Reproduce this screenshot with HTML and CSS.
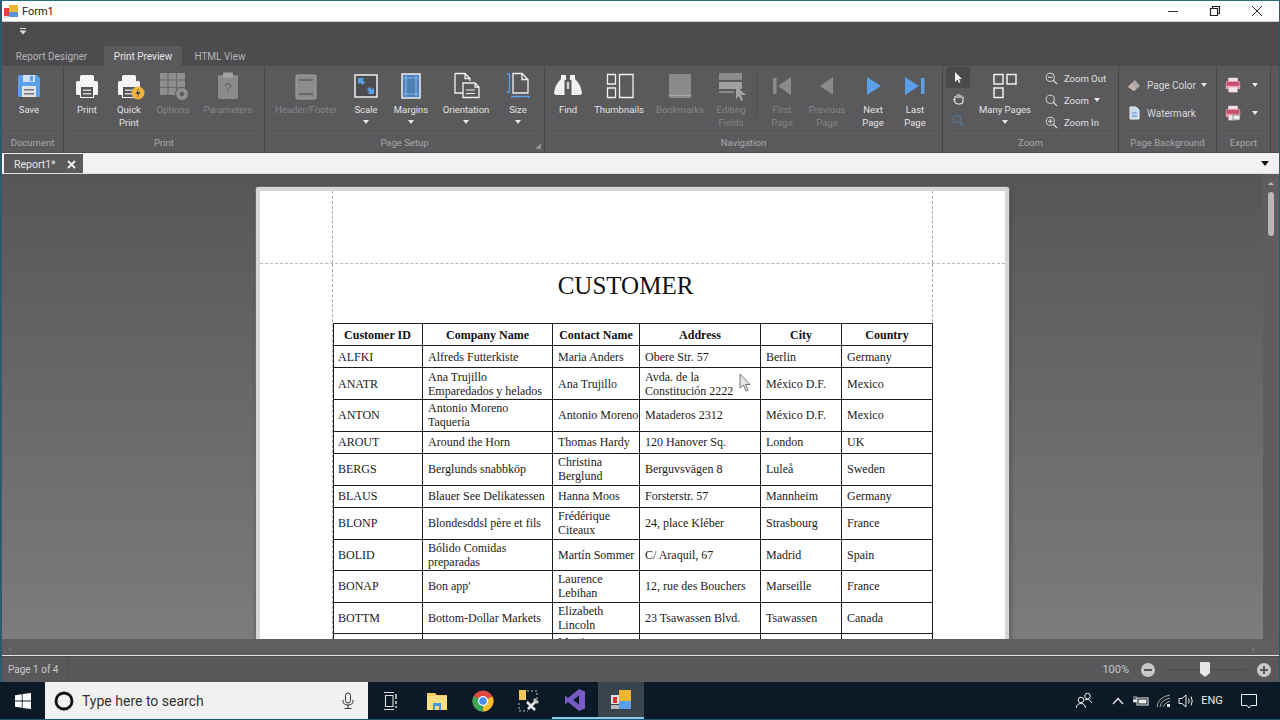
FILE: index.html
```html
<!DOCTYPE html>
<html lang="en">
<head>
<meta charset="utf-8">
<title>Form1</title>
<link rel="stylesheet" href="styles.css">
</head>
<body>
<svg class="sprites" width="0" height="0" aria-hidden="true">
  <symbol id="printer" viewBox="0 0 32 32">
    <path d="M9 11V6.500Q9 5 10.500 5H21.500Q23 5 23 6.500V11Z" fill="#f4f4f4"/>
    <path d="M5 12.500Q5 11 6.500 11H25.500Q27 11 27 12.500V23.500Q27 25 25.500 25H23V28H9V25H6.500Q5 25 5 23.500Z" fill="#f4f4f4"/>
    <rect x="10" y="17" width="12" height="10" fill="#565658"/>
    <rect x="12" y="19.500" width="8" height="1.500" fill="#cfcfcf"/>
    <rect x="12" y="23" width="8" height="1.500" fill="#cfcfcf"/>
  </symbol>
  <symbol id="pdf" viewBox="0 0 20 20">
    <path d="M4 1H16V6H4Z" fill="#f2dfe4"/>
    <path d="M1 7Q1 5 3 5H17Q19 5 19 7V15H16V19H4V15H1Z" fill="#e9a4b4"/>
    <rect x="2" y="6" width="16" height="5" fill="#c8506e"/>
    <rect x="5" y="13" width="10" height="6" fill="#f2e6ea"/>
  </symbol>
  <symbol id="mag" viewBox="0 0 16 16">
    <circle cx="6.500" cy="6.500" r="5" fill="none" stroke="currentColor" stroke-width="1.200"/>
    <path d="M10.200 10.200L15 15" stroke="currentColor" stroke-width="1.500"/>
  </symbol>
</svg>

<div class="window">
  <header class="titlebar">
    <svg class="app-icon" width="15" height="15" viewBox="0 0 15 15"><rect x="0" y="4" width="5" height="8" fill="#d9483b"/><rect x="5" y="1" width="9" height="7" fill="#f2b632"/><rect x="5" y="8" width="9" height="5" fill="#5b8fd9"/><rect x="0" y="12" width="5" height="2" fill="#ddd"/></svg>
    <span class="title-text">Form1</span>
    <div class="win-controls">
      <svg class="win-btn" width="14" height="14" viewBox="0 0 14 14"><path d="M2 7.500H12" stroke="#333" stroke-width="1"/></svg>
      <svg class="win-btn" width="14" height="14" viewBox="0 0 14 14"><path d="M2.500 4.500H9.500V11.500H2.500ZM4.500 4.500V2.500H11.500V9.500H9.500" fill="none" stroke="#222" stroke-width="1.200"/></svg>
      <svg class="win-btn" width="14" height="14" viewBox="0 0 14 14"><path d="M2 2L12 12M12 2L2 12" stroke="#222" stroke-width="1"/></svg>
    </div>
  </header>

  <div class="ribbon-head">
    <div class="qat"><svg width="8" height="7" viewBox="0 0 8 7"><path d="M1 .500H7" stroke="#ddd"/><path d="M.500 2.500H7.500L4 6.500Z" fill="#ddd"/></svg></div>
    <nav class="tabs">
      <span class="tab t1">Report Designer</span>
      <span class="tab t2 active">Print Preview</span>
      <span class="tab t3">HTML View</span>
    </nav>
  </div>

  <section class="ribbon">
    <div class="group g-doc">
      <div class="items">
        <div class="btn w54"><svg class="ico" viewBox="0 0 32 32"><path d="M5 6.500Q5 5 6.500 5H24L27 8V25.500Q27 27 25.500 27H6.500Q5 27 5 25.500Z" fill="#5b9fe8"/><rect x="10" y="5" width="12" height="7" fill="#cfe0f4"/><rect x="17" y="6" width="3" height="5" fill="#5b9fe8"/><rect x="9" y="16" width="14" height="11" fill="#dfe2e6"/><rect x="11" y="19" width="10" height="1.500" fill="#777"/><rect x="11" y="23" width="10" height="1.500" fill="#777"/></svg><span class="lbl">Save</span></div>
      </div>
      <div class="glabel">Document</div>
    </div>

    <div class="group g-print">
      <div class="items">
        <div class="btn w46"><svg class="ico"><use href="#printer"/></svg><span class="lbl">Print</span></div>
        <div class="btn w38"><svg class="ico" viewBox="0 0 32 32"><use href="#printer" width="32" height="32"/><circle cx="25" cy="23" r="6.500" fill="#f0b43c"/><path d="M26 18L22.500 24H25L24 28L27.500 22H25Z" fill="#4a4a4a"/></svg><span class="lbl">Quick<br>Print</span></div>
        <div class="btn w50 off"><svg class="ico" viewBox="0 0 32 32"><path d="M3 3H28V25H3Z" fill="#8f8f91"/><path d="M11 3V25M19.500 3V25M3 10H28M3 17.500H28" stroke="#6a6a6c" stroke-width="1.200"/><circle cx="25" cy="24" r="6.500" fill="#8f8f91" stroke="#5a5a5c"/><circle cx="25" cy="24" r="2.200" fill="#5a5a5c"/></svg><span class="lbl">Options</span></div>
        <div class="btn w60 off"><svg class="ico" viewBox="0 0 32 32"><rect x="6" y="5" width="20" height="24" rx="1.500" fill="#8b8b8d"/><rect x="11" y="2.500" width="10" height="5" rx="1" fill="#a3a3a5"/><text x="16" y="23" class="q">?</text></svg><span class="lbl">Parameters</span></div>
      </div>
      <div class="glabel">Print</div>
    </div>

    <div class="group g-setup">
      <div class="items">
        <div class="btn w82 off"><svg class="ico" viewBox="0 0 32 32"><rect x="6" y="5" width="20" height="24" rx="1" fill="#8b8b8d" stroke="#a3a3a5"/><rect x="9" y="9" width="14" height="2" fill="#68686a"/><rect x="9" y="23" width="14" height="2" fill="#68686a"/></svg><span class="lbl">Header/Footer</span></div>
        <div class="btn w38 drop"><svg class="ico" viewBox="0 0 32 32"><rect x="5" y="5" width="22" height="22" fill="#4c4c4e" stroke="#f0f0f0" stroke-width="1.500"/><path d="M8 8H14.500L12.500 10L15 12.500L12.500 15L10 12.500L8 14.500ZM24 24H17.500L19.500 22L17 19.500L19.500 17L22 19.500L24 17.500Z" fill="#5b9fe8"/></svg><span class="lbl">Scale</span></div>
        <div class="btn w52 drop"><svg class="ico" viewBox="0 0 32 32"><rect x="7" y="4" width="18" height="24" fill="#4f7fb4" stroke="#f0f0f0" stroke-width="1.500"/><path d="M11 4V28M21 4V28M7 8H25M7 24H25" stroke="#7fb4ec" stroke-width="1.200"/></svg><span class="lbl">Margins</span></div>
        <div class="btn w58 drop"><svg class="ico" viewBox="0 0 32 32"><path d="M5 3.500H15L20 8.500V11M13 23H5V3.500M15 3.500V8.500H20" fill="none" stroke="#f0f0f0" stroke-width="1.300"/><path d="M13 13H25L29 17V27.500H13Z M25 13V17H29" fill="#5a5a5c" stroke="#f0f0f0" stroke-width="1.300"/><path d="M16 20H25M16 23.500H25" stroke="#f0f0f0"/></svg><span class="lbl">Orientation</span></div>
        <div class="btn w46 drop"><svg class="ico" viewBox="0 0 32 32"><path d="M5 4H7.500V22H5" fill="none" stroke="#5b9fe8" stroke-width="1.300"/><path d="M11 3.500H20L26 9.500V23H11ZM20 3.500V9.500H26" fill="none" stroke="#f0f0f0" stroke-width="1.300"/><path d="M10 28V26.500H27V28" fill="none" stroke="#5b9fe8" stroke-width="1.300"/></svg><span class="lbl">Size</span></div>
      </div>
      <div class="glabel">Page Setup<svg class="launcher" width="6" height="6" viewBox="0 0 6 6"><path d="M6 0V6H0Z" fill="#909092"/></svg></div>
    </div>

    <div class="group g-nav">
      <div class="items">
        <div class="btn w46"><svg class="ico" viewBox="0 0 32 32"><path d="M9 5H14V10H12.500V25H4.500L2 24Q2.500 15 9 9ZM23 5H18V10H19.500V25H27.500L30 24Q29.500 15 23 9Z" fill="#f0f0f0"/><path d="M14.800 12H17.200V19H14.800Z" fill="#cfcfcf"/></svg><span class="lbl">Find</span></div>
        <div class="btn w56"><svg class="ico" viewBox="0 0 32 32"><path d="M4.500 4.500H12.500V14H4.500ZM4.500 18H12.500V27.500H4.500ZM16.500 4.500H30V27.500H16.500Z" fill="none" stroke="#f0f0f0" stroke-width="1.300"/></svg><span class="lbl">Thumbnails</span></div>
        <div class="btn w66 off"><svg class="ico" viewBox="0 0 32 32"><path d="M5 5Q5 4 6 4H27V28H7Q5 28 5 26Z" fill="#8b8b8d"/><path d="M5 25.500H27" stroke="#a9a9ab"/></svg><span class="lbl">Bookmarks</span></div>
        <div class="btn w36 off"><svg class="ico" viewBox="0 0 32 32"><rect x="4" y="3" width="23" height="7" fill="#8b8b8d"/><rect x="4" y="12" width="23" height="7" fill="#a0a0a2"/><rect x="4" y="21" width="15" height="2" fill="#8b8b8d"/><path d="M21 16V29L24 26L26 31L28 30L26 25H31Z" fill="#a3a3a5"/></svg><span class="lbl">Editing<br>Fields</span></div>
        <span class="nav-sep"></span>
        <div class="btn w44 off"><svg class="ico" viewBox="0 0 32 32"><rect x="7" y="8" width="3.500" height="16" fill="#8b8b8d"/><path d="M25 7V25L12 16Z" fill="#8b8b8d"/></svg><span class="lbl">First<br>Page</span></div>
        <div class="btn w46 off"><svg class="ico" viewBox="0 0 32 32"><path d="M22 7V25L9 16Z" fill="#8b8b8d"/></svg><span class="lbl">Previous<br>Page</span></div>
        <div class="btn w46"><svg class="ico" viewBox="0 0 32 32"><path d="M10 7V25L24 16Z" fill="#5b9fe8"/></svg><span class="lbl">Next<br>Page</span></div>
        <div class="btn w38"><svg class="ico" viewBox="0 0 32 32"><path d="M6 7V25L20 16Z" fill="#5b9fe8"/><rect x="22" y="8" width="3.500" height="16" fill="#5b9fe8"/></svg><span class="lbl">Last<br>Page</span></div>
      </div>
      <div class="glabel">Navigation</div>
    </div>

    <div class="group g-zoom">
      <div class="items">
        <div class="tools">
          <div class="tool on"><svg width="10" height="13" viewBox="0 0 10 13"><path d="M2 1V11L4.500 8.500L6 12L7.500 11.300L6 8H9Z" fill="#f0f0f0"/></svg></div>
          <div class="tool"><svg width="13" height="13" viewBox="0 0 13 13"><path d="M3 8V4M5 6V2.500M7 6V2M9 6V3M11 7V4.500V8.500Q11 12 7.500 12H6Q4 12 3 10L1.500 7" fill="none" stroke="#eee" stroke-width="1.100"/></svg></div>
          <div class="tool"><svg class="dim-mag" width="12" height="12"><use href="#mag" width="12" height="12"/></svg></div>
        </div>
        <div class="btn w60 drop"><svg class="ico" viewBox="0 0 32 32"><path d="M5 4.500H14V14H5ZM18 4.500H27V14H18ZM5 18H14V27.500H5Z" fill="none" stroke="#f0f0f0" stroke-width="1.500"/></svg><span class="lbl">Many Pages</span></div>
        <div class="zoom-list">
          <div class="row"><svg class="mag" width="13" height="13" viewBox="0 0 13 13"><use href="#mag" width="13" height="13"/><path d="M3 5.300H7.600" stroke="#ddd"/></svg><span>Zoom Out</span></div>
          <div class="row"><svg class="mag" width="13" height="13" viewBox="0 0 13 13"><use href="#mag" width="13" height="13"/></svg><span>Zoom</span><i class="arrow"></i></div>
          <div class="row"><svg class="mag" width="13" height="13" viewBox="0 0 13 13"><use href="#mag" width="13" height="13"/><path d="M3 5.300H7.600M5.300 3V7.600" stroke="#ddd"/></svg><span>Zoom In</span></div>
        </div>
      </div>
      <div class="glabel">Zoom</div>
    </div>

    <div class="group g-bg">
      <div class="items bg-list">
        <div class="row"><svg width="14" height="13" viewBox="0 0 14 13"><path d="M1 8L8 1L13 7L7 12Z" fill="#a9a9ab"/><path d="M1 8L5 4L9 10L7 12Z" fill="#c9b0a8"/></svg><span>Page Color</span><i class="arrow"></i></div>
        <div class="row"><svg width="14" height="14" viewBox="0 0 14 14"><path d="M3 1H9L12 4V13H3Z" fill="#c5d9f0" stroke="#f0f0f0"/><path d="M5 7H10M5 10H10" stroke="#5b8fc9"/></svg><span>Watermark</span></div>
      </div>
      <div class="glabel">Page Background</div>
    </div>

    <div class="group g-export">
      <div class="items exp-list">
        <div class="row"><svg width="16" height="16"><use href="#pdf" width="16" height="16"/></svg><i class="arrow"></i></div>
        <div class="row"><svg width="16" height="16" viewBox="0 0 16 16"><use href="#pdf" width="16" height="16"/><rect x="8" y="10" width="7" height="5" fill="#eee" stroke="#5a5a5c" stroke-width=".6"/></svg><i class="arrow"></i></div>
      </div>
      <div class="glabel">Export</div>
    </div>
  </section>

  <div class="doc-tabs">
    <div class="doc-tab"><span>Report1*</span><svg width="9" height="9" viewBox="0 0 9 9"><path d="M1 1L8 8M8 1L1 8" stroke="#eee" stroke-width="1.800"/></svg></div>
    <i class="doc-arrow"></i>
  </div>

  <main class="viewer">
    <div class="canvas">
      <article class="page">
        <svg class="cursor" width="12" height="19" viewBox="0 0 12 19"><path d="M1 1V15L4.500 12L7 18L9 17L6.500 11.500H11Z" fill="#e8e8e8" stroke="#555" stroke-width=".8"/></svg>
        <div class="top-margin"><div class="frame top-frame"></div></div>
        <div class="frame body-frame">
          <h1 class="report-title">CUSTOMER</h1>
          <table class="report">
            <colgroup><col class="c1"><col class="c2"><col class="c3"><col class="c4"><col class="c5"><col class="c6"></colgroup>
            <thead><tr><th>Customer ID</th><th>Company Name</th><th>Contact Name</th><th>Address</th><th>City</th><th>Country</th></tr></thead>
            <tbody>
              <tr class="s"><td>ALFKI</td><td>Alfreds Futterkiste</td><td>Maria Anders</td><td>Obere Str. 57</td><td>Berlin</td><td>Germany</td></tr>
              <tr class="d"><td>ANATR</td><td>Ana Trujillo<br>Emparedados y helados</td><td>Ana Trujillo</td><td>Avda. de la<br>Constitución 2222</td><td>México D.F.</td><td>Mexico</td></tr>
              <tr class="d"><td>ANTON</td><td>Antonio Moreno<br>Taquería</td><td>Antonio Moreno</td><td>Mataderos 2312</td><td>México D.F.</td><td>Mexico</td></tr>
              <tr class="s"><td>AROUT</td><td>Around the Horn</td><td>Thomas Hardy</td><td>120 Hanover Sq.</td><td>London</td><td>UK</td></tr>
              <tr class="d"><td>BERGS</td><td>Berglunds snabbköp</td><td>Christina<br>Berglund</td><td>Berguvsvägen 8</td><td>Luleå</td><td>Sweden</td></tr>
              <tr class="s"><td>BLAUS</td><td>Blauer See Delikatessen</td><td>Hanna Moos</td><td>Forsterstr. 57</td><td>Mannheim</td><td>Germany</td></tr>
              <tr class="d"><td>BLONP</td><td>Blondesddsl père et fils</td><td>Frédérique<br>Citeaux</td><td>24, place Kléber</td><td>Strasbourg</td><td>France</td></tr>
              <tr class="d"><td>BOLID</td><td>Bólido Comidas<br>preparadas</td><td>Martín Sommer</td><td>C/ Araquil, 67</td><td>Madrid</td><td>Spain</td></tr>
              <tr class="d"><td>BONAP</td><td>Bon app'</td><td>Laurence<br>Lebihan</td><td>12, rue des Bouchers</td><td>Marseille</td><td>France</td></tr>
              <tr class="d"><td>BOTTM</td><td>Bottom-Dollar Markets</td><td>Elizabeth<br>Lincoln</td><td>23 Tsawassen Blvd.</td><td>Tsawassen</td><td>Canada</td></tr>
              <tr class="d clip"><td></td><td></td><td>Martine</td><td></td><td></td><td></td></tr>
            </tbody>
          </table>
        </div>
      </article>
    </div>
    <div class="vscroll"><i class="up"></i><i class="thumb"></i></div>
  </main>
  <div class="hscroll"><i class="left"></i><i class="right"></i></div>

  <footer class="status">
    <span class="page-no">Page 1 of 4</span>
    <div class="zoom-bar">
      <span class="pct">100%</span>
      <svg width="14" height="14" viewBox="0 0 14 14"><circle cx="7" cy="7" r="7" fill="#c8c8c8"/><rect x="3" y="6" width="8" height="2" fill="#555"/></svg>
      <div class="slider"><svg width="10" height="16" viewBox="0 0 10 16"><path d="M0 1Q0 0 1 0H9Q10 0 10 1V11L5 15L0 11Z" fill="#e6e6e6"/></svg></div>
      <svg width="14" height="14" viewBox="0 0 14 14"><circle cx="7" cy="7" r="7" fill="#c8c8c8"/><path d="M3 6H6V3H8V6H11V8H8V11H6V8H3Z" fill="#555"/></svg>
    </div>
  </footer>
</div>

<div class="taskbar">
  <div class="start"><svg width="16" height="16" viewBox="0 0 16 16"><path d="M0 2.200L6.800 1.200V7.600H0ZM7.600 1.100L16 0V7.600H7.600ZM0 8.400H6.800V14.800L0 13.800ZM7.600 8.400H16V16L7.600 14.900Z" fill="#fff"/></svg></div>
  <div class="search">
    <svg class="cortana" width="20" height="20" viewBox="0 0 20 20"><circle cx="10" cy="10" r="8" fill="none" stroke="#111" stroke-width="2.800"/></svg>
    <span class="search-text">Type here to search</span>
    <svg class="mic" width="12" height="18" viewBox="0 0 12 18"><rect x="3.500" y="1" width="5" height="10" rx="2.500" fill="none" stroke="#333"/><path d="M1 8V9Q1 13 6 13Q11 13 11 9V8M6 13V16M2.500 16.500H9.500" fill="none" stroke="#333"/></svg>
  </div>
  <div class="tb-item"><svg width="16" height="18" viewBox="0 0 16 18"><path d="M1 .500H11M1 17.500H11M2.500 3.500H10V14.500H2.500Z" fill="none" stroke="#ddd" stroke-width="1.100"/><path d="M13 2V7M13 9V12M13 14V16" stroke="#ddd" stroke-width="1.500"/></svg></div>
  <div class="tb-item"><svg width="20" height="18" viewBox="0 0 20 18"><path d="M0 1H8L10 3H20V18H0Z" fill="#f2c75c"/><rect y="4" width="20" height="14" fill="#fbdd84"/><rect x="6" y="11" width="8" height="7" fill="#3f9ad6"/><rect x="8" y="14" width="4" height="4" fill="#fbdd84"/></svg></div>
  <div class="tb-item"><svg width="22" height="22" viewBox="0 0 22 22"><circle cx="11" cy="11" r="10.500" fill="#dd4b3e"/><path d="M11 11L20.500 6.500A10.500 10.500 0 0 1 11 21.500Z" fill="#f6c02e"/><path d="M11 11L11 21.500A10.500 10.500 0 0 1 1.600 6.200Z" fill="#3aa655"/><circle cx="11" cy="11" r="5" fill="#fff"/><circle cx="11" cy="11" r="3.800" fill="#4a8ff0"/></svg></div>
  <div class="tb-item"><svg width="24" height="24" viewBox="0 0 24 24"><rect x="2" y="1" width="7" height="10" fill="#f2c75c"/><path d="M10 2H20V12M2 14V22H11" fill="none" stroke="#bbb" stroke-dasharray="2 2"/><path d="M10 13L18 21M19 12L11 20" stroke="#eee" stroke-width="2.500"/><path d="M17 10L21 14" stroke="#bbb" stroke-width="3"/></svg></div>
  <div class="tb-item under"><svg width="22" height="24" viewBox="0 0 22 24"><path d="M15 1L21 3.500V20.500L15 23L4 14L1 16.500V7.500L4 10ZM15 7.500L9 12L15 16.500Z" fill="#7a5cc6"/></svg></div>
  <div class="tb-item under current"><svg width="20" height="20" viewBox="0 0 20 20"><rect x="0" y="5" width="8" height="9" fill="#dfdfdf"/><rect x="2" y="7" width="4" height="6" fill="#d33"/><rect x="8" y="0" width="12" height="11" fill="#f2b632"/><rect x="8" y="11" width="12" height="8" fill="#5b9fe8"/><rect x="0" y="15" width="8" height="4" fill="#bbb"/></svg></div>
  <div class="tray">
    <div class="tr people"><svg width="18" height="18" viewBox="0 0 18 18"><circle cx="6" cy="8" r="2.800" fill="none" stroke="#eee"/><circle cx="12.500" cy="4" r="2.800" fill="none" stroke="#eee"/><path d="M1 16Q2 11.500 6 11.500Q10 11.500 10.500 16M10 8Q14 6 17 11" fill="none" stroke="#eee"/></svg></div>
    <div class="tr w22"><svg width="12" height="8" viewBox="0 0 12 8"><path d="M1 7L6 1.500L11 7" fill="none" stroke="#eee" stroke-width="1.200"/></svg></div>
    <div class="tr w23"><svg width="16" height="12" viewBox="0 0 16 12"><rect x="4" y="3" width="11" height="7" fill="none" stroke="#eee"/><rect x="5.500" y="4.500" width="8" height="4" fill="#eee"/><path d="M1 1V5M3 1V5M.500 5H3.500V7H.500Z" stroke="#eee" stroke-width=".8" fill="#eee"/></svg></div>
    <div class="tr w23"><svg width="16" height="14" viewBox="0 0 16 14"><path d="M1 13Q2 3 14 1M4 13Q5 6 14 4M7 13Q8 9 14 7" fill="none" stroke="#aaa"/><rect x="11" y="10" width="3" height="3" fill="#eee"/></svg></div>
    <div class="tr w23"><svg width="17" height="14" viewBox="0 0 17 14"><path d="M1 4.500H4L8 1V13L4 9.500H1Z" fill="none" stroke="#eee"/><path d="M10.500 4.500Q12 7 10.500 9.500M13 2.500Q15.500 7 13 11.500" fill="none" stroke="#eee"/></svg></div>
    <div class="tr w28 eng">ENG</div>
    <div class="tr w46"><svg width="16" height="16" viewBox="0 0 16 16"><path d="M.500 1.500H15.500V12.500H10L8 15L6 12.500H.500Z" fill="none" stroke="#eee"/></svg></div>
  </div>
</div>
</body>
</html>
```

FILE: styles.css
```css
* { box-sizing: border-box; }
html, body { margin: 0; height: 100%; }
body {
  width: 1280px; height: 720px; overflow: hidden;
  display: flex; flex-direction: column;
  font-family: Roboto, "Liberation Sans", sans-serif;
  background: #0b1a26;
}
.sprites { position: absolute; }
i { display: block; }

.window {
  flex: 1 1 auto; min-height: 0; display: flex; flex-direction: column;
  border-left: 2px solid #2a5a74; border-right: 1px solid #2a5a74; border-top: 1px solid #2a6a80;
  background: #4c4b4d;
}
.titlebar {
  height: 21px; flex: none; background: #fff; display: flex; align-items: center;
  padding-left: 1px; border-bottom: 1px solid #cfcfcf;
}
.app-icon { margin-right: 3px; margin-left: 1px; }
.title-text { font-size: 11px; color: #222; }
.win-controls { margin-left: auto; display: flex; padding-right: 15px; gap: 28px; }

.ribbon-head { height: 44px; flex: none; background: #4c4b4d; display: flex; flex-direction: column; }
.qat { height: 24px; padding: 6px 0 0 17px; display: flex; align-items: flex-start; }
.tabs { height: 20px; display: flex; font-size: 10px; color: #b4b4b6; }
.tab { display: flex; align-items: center; justify-content: center; }
.tab.t1 { width: 102px; padding-right: 3px; }
.tab.t2 { width: 78px; }
.tab.t3 { width: 76px; }
.tab.active { background: #5a5a5c; color: #e6e6e6; }

.ribbon { height: 86px; flex: none; background: #5a5a5c; display: flex; font-size: 9.5px; color: #e2e2e2; }
.group {
  display: flex; flex-direction: column; height: 86px; flex: none;
  border-right: 1px solid #474749;
}
.g-doc { width: 62px; }
.g-print { width: 201px; }
.g-setup { width: 280px; }
.g-nav { width: 398px; }
.g-zoom { width: 176px; }
.g-bg { width: 98px; }
.g-export { width: 54px; }
.items { height: 67px; display: flex; padding-top: 4px; }
.glabel {
  position: relative; height: 18px; line-height: 17px; text-align: center; color: #a8a8aa;
  margin: 0 3px; border-top: 1px solid #626264;
}
.launcher { position: absolute; right: 0; bottom: 2px; }

.btn { display: flex; flex-direction: column; align-items: center; text-align: center; flex: none; line-height: 13px; }
.ico { width: 32px; height: 32px; flex: none; margin-bottom: 1px; }
.off { color: #858587; }
.w36 { width: 36px; } .w38 { width: 38px; } .w44 { width: 44px; } .w46 { width: 46px; }
.w50 { width: 50px; } .w52 { width: 52px; } .w54 { width: 54px; } .w56 { width: 56px; } .w58 { width: 58px; }
.w60 { width: 60px; } .w66 { width: 66px; } .w82 { width: 82px; }
.q { font: 14px "Liberation Sans", sans-serif; fill: #68686a; text-anchor: middle; }
.nav-sep { width: 1px; height: 46px; margin: 2px 3px 0 7px; background: #4c4c4e; flex: none; }
.drop::after, .arrow {
  content: ""; display: block; width: 0; height: 0; flex: none;
  border-left: 3.5px solid transparent; border-right: 3.5px solid transparent; border-top: 4px solid #e8e8e8;
}
.drop::after { margin-top: 4px; }

.tools { width: 30px; display: flex; flex-direction: column; align-items: center; flex: none; }
.tool { width: 24px; height: 21px; display: flex; align-items: center; justify-content: center; border-radius: 2px; }
.tool.on { background: #4a4a4c; }
.dim-mag { color: #4f7fa8; }
.g-zoom .items { padding-top: 1px; }
.g-zoom .btn { padding-top: 3px; margin-left: 2px; }
.mag { color: #ddd; }
.zoom-list { display: flex; flex-direction: column; margin-left: 10px; }
.row { display: flex; align-items: center; gap: 6px; height: 22px; }
.arrow { margin-left: -1px; }
.bg-list { flex-direction: column; padding: 5px 0 0 8px; font-size: 10px; }
.bg-list .row { height: 28px; gap: 6px; color: #d8d8d8; }
.exp-list { flex-direction: column; padding: 5px 0 0 8px; }
.exp-list .row { height: 28px; gap: 12px; }

.doc-tabs {
  height: 21px; flex: none; margin-top: 1px; background: #f2f1f4; border-bottom: 1px solid #e0e0e0;
  display: flex; align-items: flex-end; padding-left: 2px; position: relative;
}
.doc-tab {
  width: 79px; height: 19px; background: #5a5a5c; color: #e4e4e4; font-size: 10.5px;
  display: flex; align-items: center; justify-content: space-between; padding: 1px 7px 0 10px;
}
.doc-arrow {
  margin: 0 10px 7px auto; width: 0; height: 0;
  border-left: 4px solid transparent; border-right: 4px solid transparent; border-top: 5px solid #111;
}

.viewer { flex: 1 1 auto; min-height: 0; display: flex; background: linear-gradient(#565658, #7c7c7e); }
.canvas { flex: 1 1 auto; min-width: 0; overflow: hidden; display: flex; justify-content: center; padding-top: 13px; }
.page {
  position: relative; flex: none; width: 753px; height: 1000px; padding: 0;
  background: #fff; border: 4px solid #d6d6d8; box-shadow: 0 0 0 1px #6a6a6c, 1px 1px 5px #444;
  border-radius: 2px;
}
.cursor { position: absolute; left: 479px; top: 182px; }
.top-margin { height: 73px; border-bottom: 1px dashed #b8b8b8; }
.frame { margin-left: 72px; width: 601px; border-left: 1px dashed #a8a8a8; border-right: 1px dashed #a8a8a8; }
.top-frame { height: 72px; }
.report-title {
  margin: 0; height: 59px; padding: 4px 14px 0 0; text-align: center; font: normal 25px/36px "Liberation Serif", serif; color: #111;
}
.report {
  width: 599px; table-layout: fixed; border-collapse: collapse;
  font: 12px/14px "Liberation Serif", serif; color: #1a1a1a;
}
.c1 { width: 89px; } .c2 { width: 130px; } .c3 { width: 87px; } .c4 { width: 121px; } .c5 { width: 81px; } .c6 { width: 91px; }
.report th, .report td { border: 1px solid #1e1e1e; padding: 0 0 0 5px; vertical-align: middle; white-space: nowrap; overflow: hidden; }
.report th { height: 22px; padding: 0; text-align: center; font-weight: bold; color: #111; }
.report td:first-child { padding-left: 4px; }
.report th:first-child { padding-right: 1px; }
.report .s td { height: 22.4px; }
.report .d td { height: 31.6px; }
.report .clip td { vertical-align: top; padding-top: 1px; height: 40px; }

.vscroll { width: 16px; flex: none; display: flex; flex-direction: column; align-items: center; background: #5e5e60; padding-top: 8px; }
.up { width: 0; height: 0; border-left: 3px solid transparent; border-right: 3px solid transparent; border-bottom: 3px solid #bbb; }
.thumb { width: 6px; height: 44px; margin-top: 7px; background: #b8b8b8; border-radius: 3px; }
.hscroll {
  height: 17px; flex: none; background: #5f5f61; border-bottom: 1px solid #e4e4e4;
  display: flex; align-items: center; justify-content: space-between; padding: 4px 24px 0 6px;
}
.left { width: 0; height: 0; border-top: 3px solid transparent; border-bottom: 3px solid transparent; border-right: 3px solid #737375; }
.right { width: 0; height: 0; border-top: 3px solid transparent; border-bottom: 3px solid transparent; border-left: 3px solid #737375; }

.status {
  height: 26px; flex: none; background: #59585a; display: flex; align-items: center;
  font-size: 10px; color: #c8c8c8; border-top: 1px solid #4c4b4d;
}
.page-no { width: 67px; height: 25px; line-height: 26px; padding-left: 6px; border-right: 1px solid #4e4e50; }
.zoom-bar { margin-left: auto; display: flex; align-items: center; padding-right: 8px; }
.pct { margin-right: 12px; font-size: 11px; }
.slider {
  width: 102px; height: 16px; display: flex; justify-content: center; padding-right: 2px;
  background: linear-gradient(#4c4c4e, #4c4c4e) center / 82px 1px no-repeat;
}

.taskbar { height: 38px; flex: none; background: #0b1a26; display: flex; align-items: stretch; border-bottom: 1px solid #1a5a6c; }
.start { width: 45px; display: flex; align-items: center; justify-content: center; }
.search {
  width: 323px; background: #f1f1f1; display: flex; align-items: center; padding-left: 9px;
  color: #333;
}
.search-text { margin-left: 8px; font-size: 14px; }
.mic { margin-left: auto; margin-right: 14px; }
.tb-item { width: 46px; display: flex; align-items: center; justify-content: center; flex: none; }
.under { border-bottom: 2px solid #8cc8ec; }
.current { background: #39444c; }
.tray { margin-left: auto; display: flex; padding-right: 8px; color: #eee; }
.tr { display: flex; align-items: center; justify-content: center; }
.people { width: 40px; padding-right: 6px; }
.w22 { width: 22px; } .w23 { width: 23px; } .w28 { width: 28px; }
.eng { font-size: 11px; }
```
